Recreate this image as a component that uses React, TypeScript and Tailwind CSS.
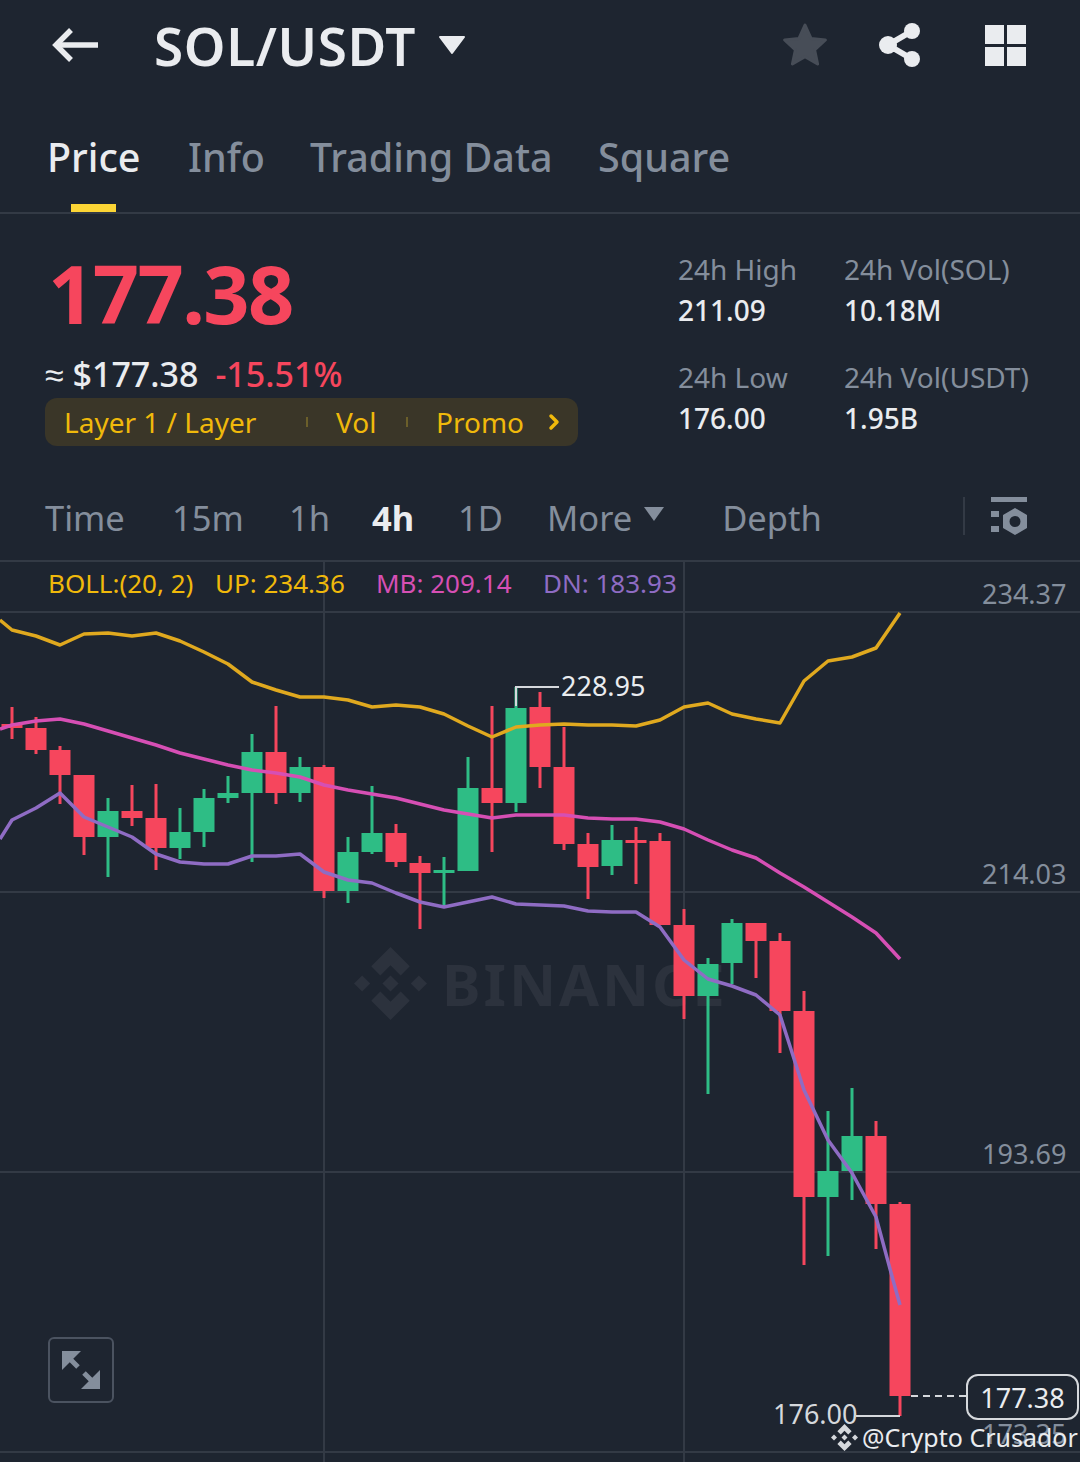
import { ChevronRight } from 'lucide-react'

const UP = '#2ebd85'
const DOWN = '#f6465d'

// x, wickTop, wickBottom, bodyTop, bodyBottom, up
const candles: [number, number, number, number, number, boolean][] = [
  [12, 707, 739, 724, 728, false],
  [36, 717, 754, 728, 750, false],
  [60, 746, 804, 750, 775, false],
  [84, 775, 855, 775, 837, false],
  [108, 798, 877, 811, 837, true],
  [132, 785, 826, 811, 818, false],
  [156, 784, 870, 818, 848, false],
  [180, 808, 859, 832, 848, true],
  [204, 789, 847, 798, 832, true],
  [228, 776, 803, 793, 798, true],
  [252, 734, 862, 752, 793, true],
  [276, 706, 804, 752, 793, false],
  [300, 757, 802, 767, 793, true],
  [324, 765, 898, 767, 891, false],
  [348, 837, 903, 852, 891, true],
  [372, 786, 854, 833, 852, true],
  [396, 824, 867, 833, 862, false],
  [420, 856, 929, 863, 873, false],
  [444, 857, 907, 870, 873, true],
  [468, 757, 871, 788, 871, true],
  [492, 706, 852, 788, 803, false],
  [516, 687, 812, 708, 803, true],
  [540, 692, 788, 707, 767, false],
  [564, 727, 850, 767, 844, false],
  [588, 833, 899, 844, 867, false],
  [612, 825, 875, 840, 866, true],
  [636, 827, 884, 840, 843, false],
  [660, 833, 925, 841, 925, false],
  [684, 909, 1019, 925, 996, false],
  [708, 958, 1094, 964, 996, true],
  [732, 919, 984, 923, 963, true],
  [756, 923, 978, 923, 941, false],
  [780, 933, 1053, 941, 1011, false],
  [804, 991, 1265, 1011, 1197, false],
  [828, 1111, 1256, 1171, 1197, true],
  [852, 1088, 1200, 1136, 1171, true],
  [876, 1121, 1249, 1136, 1204, false],
  [900, 1202, 1416, 1204, 1396, false],
]

const upper =
  '0,620 12,630 36,636 60,645 84,634 108,633 132,636 156,633 180,641 204,652 228,664 252,682 276,690 300,697 324,697 348,700 372,707 396,705 420,707 444,714 468,726 492,737 516,727 540,725 564,724 588,725 612,725 636,726 660,720 684,707 708,703 732,714 756,719 780,723 804,681 828,661 852,657 876,648 900,613'
const middle =
  '0,729 12,725 36,721 60,719 84,724 108,731 132,738 156,745 180,753 204,759 228,765 252,770 276,773 300,777 324,785 348,790 372,794 396,798 420,804 444,810 468,814 492,818 516,815 540,815 564,815 588,818 612,819 636,819 660,822 684,829 708,840 732,850 756,858 780,873 804,887 828,902 852,917 876,933 900,959'
const lower =
  '0,839 12,820 36,808 60,793 84,817 108,827 132,837 156,854 180,862 204,864 228,864 252,856 276,856 300,854 324,872 348,880 372,883 396,893 420,902 444,907 468,902 492,897 516,904 540,905 564,906 588,911 612,912 636,912 660,927 684,960 708,979 732,986 756,995 780,1015 804,1090 828,1140 852,1173 876,1217 893,1280 900,1305'

const stats = [
  ['24h High', '211.09', '24h Vol(SOL)', '10.18M'],
  ['24h Low', '176.00', '24h Vol(USDT)', '1.95B'],
]

function BinanceMark({ className }: { className?: string }) {
  return (
    <svg viewBox="0 0 72 72" className={className} fill="currentColor">
      <path d="M36 0 L55 19 L46 28 L36 18 L26 28 L17 19 Z" />
      <path d="M36 72 L17 53 L26 44 L36 54 L46 44 L55 53 Z" />
      <path d="M0 36 L8 28 L16 36 L8 44 Z" />
      <path d="M56 36 L64 28 L72 36 L64 44 Z" />
      <path d="M36 28 L44 36 L36 44 L28 36 Z" />
    </svg>
  )
}

export default function App() {
  return (
    <div className="w-[1080px] h-[1462px] overflow-hidden bg-[#1e2530] font-['Noto_Sans',sans-serif] text-[#eaecef]">
      {/* Header */}
      <div className="flex items-center h-[90px] pl-[52px] pr-[54px]">
        <svg width="46" height="36" viewBox="0 0 46 36" fill="none" stroke="#eaecef" strokeWidth="5.5">
          <path d="M46 18 H4" />
          <path d="M19 3 L4 18 L19 33" />
        </svg>
        <h1 className="ml-[56px] text-[53px] font-semibold leading-none tracking-[0.012em]">SOL/USDT</h1>
        <svg className="ml-[22px]" width="28" height="20" viewBox="0 0 28 20" fill="#eaecef" stroke="#eaecef" strokeWidth="2" strokeLinejoin="round">
          <path d="M2 2 H26 L14 18 Z" />
        </svg>
        <svg className="ml-auto" width="48" height="48" viewBox="0 0 24 24" fill="#474d57" stroke="#474d57" strokeWidth="1.5" strokeLinejoin="round">
          <path d="M12 2 L15 8.700 L22.200 9.500 L16.800 14.400 L18.300 21.500 L12 17.900 L5.700 21.500 L7.200 14.400 L1.800 9.500 L9 8.700 Z" />
        </svg>
        <svg className="ml-[49px] mr-[3px]" width="44" height="46" viewBox="0 0 44 46" fill="#eaecef" stroke="#eaecef">
          <path d="M34 9 L10 23 L34 37" fill="none" strokeWidth="6" />
          <circle cx="34" cy="9" r="8" strokeWidth="0" />
          <circle cx="10" cy="23" r="9" strokeWidth="0" />
          <circle cx="34" cy="37" r="8" strokeWidth="0" />
        </svg>
        <div className="ml-[60px] grid grid-cols-2 gap-[3px] w-[41px]">
          <div className="h-[19px] bg-[#eaecef]" />
          <div className="h-[19px] bg-[#eaecef]" />
          <div className="h-[19px] bg-[#eaecef]" />
          <div className="h-[19px] bg-[#eaecef]" />
        </div>
      </div>

      {/* Tabs */}
      <div className="flex items-start h-[124px] pl-[47px] pt-[41px] border-b-2 border-[#333a45] text-[39.500px] font-medium leading-[52px] text-[#848e9c]">
        <div className="relative w-[141px] text-[#eaecef]">
          Price
          <div className="absolute left-[24px] top-[73px] w-[45px] h-[8px] bg-[#fcd535]" />
        </div>
        <div className="w-[122px]">Info</div>
        <div className="w-[288px]">Trading Data</div>
        <div>Square</div>
      </div>

      {/* Price and stats */}
      <div className="flex h-[244px]">
        <div className="w-[678px] pl-[45px] pt-[36px]">
          <div className="pl-[3px] text-[81px] font-bold leading-[86px] tracking-[-0.02em] text-[#f6465d]">177.38</div>
          <div className="flex items-center mt-[18px] h-[40px] text-[34px] font-medium leading-none">
            <span>≈ $177.38</span>
            <span className="ml-[17px] text-[#f6465d]">-15.51%</span>
          </div>
          <div className="flex items-center mt-[4px] w-[533px] h-[48px] pl-[19px] rounded-xl bg-[#3a3628] text-[28px] leading-none text-[#f0b90b]">
            <span className="w-[242px]">Layer 1 / Layer</span>
            <span className="w-[2px] h-[10px] bg-[#6b5f2a]" />
            <span className="ml-[28px] w-[70px]">Vol</span>
            <span className="w-[2px] h-[10px] bg-[#6b5f2a]" />
            <span className="ml-[28px]">Promo</span>
            <ChevronRight className="ml-[18px]" size={24} strokeWidth={3.5} />
          </div>
        </div>
        <div className="pt-[35px] text-[28px] leading-[40px]">
          {stats.map((row) => (
            <div key={row[0]} className="flex h-[108px]">
              <div className="w-[166px]">
                <div className="text-[#848e9c]">{row[0]}</div>
                <div className="mt-[1px] font-medium">{row[1]}</div>
              </div>
              <div>
                <div className="text-[#848e9c]">{row[2]}</div>
                <div className="mt-[1px] font-medium">{row[3]}</div>
              </div>
            </div>
          ))}
        </div>
      </div>

      {/* Intervals */}
      <div className="flex items-center h-[104px] pl-[45px] pt-[18px] border-b-2 border-[#333a45] text-[34.500px] leading-none text-[#848e9c]">
        <span className="w-[127px]">Time</span>
        <span className="w-[117px]">15m</span>
        <span className="w-[83px]">1h</span>
        <span className="w-[86px] font-bold text-[#eaecef]">4h</span>
        <span className="w-[89px]">1D</span>
        <span>More</span>
        <svg className="ml-[12px] mb-2" width="20" height="14" viewBox="0 0 20 14" fill="#848e9c">
          <path d="M0 0 H20 L10 14 Z" />
        </svg>
        <span className="ml-[58px]">Depth</span>
        <div className="ml-auto mb-[4px] w-[2px] h-[38px] bg-[#333a45]" />
        <svg className="ml-[25px] mr-[52px] mb-[4px]" width="38" height="38" viewBox="0 0 38 38" fill="#848e9c">
          <rect x="1" y="0" width="36" height="5" />
          <rect x="1" y="14" width="8" height="6" />
          <rect x="1" y="29" width="8" height="6" />
          <path fillRule="evenodd" d="M25 11 L37 18 V31 L25 38 L13 31 V18 Z M25 19 A5.500 5.500 0 1 0 25 30 A5.500 5.500 0 1 0 25 19 Z" />
        </svg>
      </div>

      {/* Chart */}
      <div className="relative h-[900px]">
        <div className="relative z-10 flex items-center pl-[48px] h-[42px] text-[26px] leading-none">
          <span className="w-[167px] text-[#f0b90b]">BOLL:(20, 2)</span>
          <span className="w-[161px] text-[#f0b90b]">UP: 234.36</span>
          <span className="w-[167px] text-[#d64fb4]">MB: 209.14</span>
          <span className="text-[#8f6cc4]">DN: 183.93</span>
        </div>

        <div className="absolute left-[354px] top-[385px] flex items-center text-[#2c323d]">
          <BinanceMark className="w-[73px] h-[73px]" />
          <span className="ml-[15px] text-[58px] font-bold leading-none tracking-[0.05em]">BINANCE</span>
        </div>

        <svg className="absolute left-0 top-0" width="1080" height="900" viewBox="0 562 1080 900">
          <g stroke="#333a45" strokeWidth="2">
            <path d="M0 612 H1080 M0 892 H1080 M0 1172 H1080 M0 1452 H1080" />
            <path d="M324 562 V1462 M684 562 V1462" />
          </g>
          {candles.map(([x, wt, wb, bt, bb, up]) => (
            <g key={x} fill={up ? UP : DOWN}>
              <rect x={x - 1.5} y={wt} width="3" height={wb - wt} />
              <rect x={x - 10.5} y={bt} width="21" height={bb - bt} />
            </g>
          ))}
          <g fill="none" strokeWidth="3.500" strokeLinejoin="round">
            <polyline points={upper} stroke="#e0a91f" />
            <polyline points={middle} stroke="#d64fb4" />
            <polyline points={lower} stroke="#8f6cc4" />
          </g>
          <g fill="none" stroke="#d5d8dc" strokeWidth="2">
            <path d="M516 706 V687 H559" />
            <path d="M900 1416 H856" />
            <path d="M911 1396 H966" strokeDasharray="7 5" />
          </g>
        </svg>

        <span className="absolute left-[982px] top-[18px] text-[27px] leading-none text-[#848e9c]">234.37</span>
        <span className="absolute left-[982px] top-[298px] text-[27px] leading-none text-[#848e9c]">214.03</span>
        <span className="absolute left-[982px] top-[578px] text-[27px] leading-none text-[#848e9c]">193.69</span>
        <span className="absolute left-[982px] top-[858px] text-[27px] leading-none text-[#848e9c]">173.35</span>

        <span className="absolute left-[561px] top-[110px] text-[27px] leading-none text-[#eaecef]">228.95</span>
        <span className="absolute left-[773px] top-[838px] text-[27px] leading-none text-[#d5d8dc]">176.00</span>
        <div className="absolute left-[966px] top-[812px] flex items-center justify-center w-[113px] h-[46px] rounded-xl border-2 border-[#d5d8dc] bg-[#1e2530] text-[27px] leading-none text-[#eaecef]">
          177.38
        </div>

        <div className="absolute left-[48px] top-[775px] flex items-center justify-center w-[66px] h-[66px] rounded-md border-2 border-[#4b5360]">
          <svg width="38" height="38" viewBox="0 0 38 38" fill="#848e9c" stroke="#848e9c">
            <path d="M0 0 H19 L0 19 Z" strokeWidth="0" />
            <path d="M38 38 H19 L38 19 Z" strokeWidth="0" />
            <path d="M6 6 L16 16 M22 22 L32 32" fill="none" strokeWidth="5" />
          </svg>
        </div>

        <div className="absolute left-[831px] top-[862px] flex items-center whitespace-nowrap text-[25px] leading-none text-[#eaecef]">
          <BinanceMark className="w-[27px] h-[27px] text-[#d5d8dc]" />
          <span className="ml-[4px]">@Crypto Crusador</span>
        </div>
      </div>
    </div>
  )
}
